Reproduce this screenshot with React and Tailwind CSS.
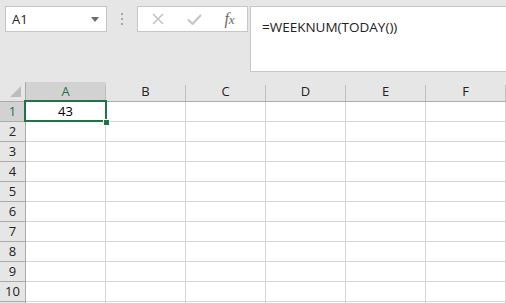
import React from "react";

const cols = ["A", "B", "C", "D", "E", "F"];
const rows = [1, 2, 3, 4, 5, 6, 7, 8, 9, 10, 11];

export default function App() {
  return (
    <div
      className="relative w-[506px] h-[303px] overflow-hidden bg-[#e6e6e6] text-[#222]"
      style={{ fontFamily: '"Open Sans", "Noto Sans", sans-serif' }}
    >
      {/* Toolbar */}
      <div className="flex items-start h-[82px] pt-[6px] pl-[5px]">
        <div className="shrink-0 w-[102px] h-[26px] bg-white border border-[#c6c6c6] flex items-center justify-between pl-[6px] pr-[7px]">
          <span className="text-[13px] leading-none text-[#222]">A1</span>
          <svg width="8" height="5" viewBox="0 0 8 5">
            <path d="M0 0 L8 0 L4 5 Z" fill="#6b6b6b" />
          </svg>
        </div>
        <div className="shrink-0 w-[30px] h-[26px] flex flex-col items-center justify-center gap-[3px]">
          <span className="block w-[2px] h-[2px] bg-[#a8a8a8]" />
          <span className="block w-[2px] h-[2px] bg-[#a8a8a8]" />
          <span className="block w-[2px] h-[2px] bg-[#a8a8a8]" />
        </div>
        <div className="shrink-0 w-[111px] h-[26px] bg-white border border-[#c6c6c6] flex items-center">
          <div className="w-[38px] flex justify-center pl-[1px]">
            <svg width="12" height="12" viewBox="0 0 12 12">
              <path d="M1 1 L11 11 M11 1 L1 11" stroke="#c4c4c4" strokeWidth="1.6" fill="none" />
            </svg>
          </div>
          <div className="w-[36px] flex justify-center">
            <svg width="15" height="11" viewBox="0 0 15 11">
              <path d="M1 5.5 L5.5 10 L14 1" stroke="#c4c4c4" strokeWidth="2" fill="none" />
            </svg>
          </div>
          <div className="w-[35px] flex justify-center">
            <span
              className="italic text-[16px] leading-none text-[#666]"
              style={{ fontFamily: '"Liberation Serif", serif' }}
            >
              f<span className="text-[13px]">x</span>
            </span>
          </div>
        </div>
        <div className="shrink-0 ml-[2px] w-[270px] h-[66px] bg-white border border-[#c6c6c6] pl-[11px] pt-[7px]">
          <span className="text-[13.5px] leading-[16px] text-[#222]">=WEEKNUM(TODAY())</span>
        </div>
      </div>

      {/* Grid */}
      <div className="grid grid-cols-[26px_repeat(6,80px)] text-[13px] leading-none">
        {/* header row */}
        <div className="relative h-[20px] border-r border-b border-[#ababab]">
          <svg className="absolute left-[10px] top-[4px]" width="12" height="12" viewBox="0 0 12 12">
            <path d="M0 11 L11 0 L11 11 Z" fill="#bdbdbd" />
          </svg>
        </div>
        {cols.map((c, i) => (
          <div
            key={c}
            className={
              "h-[20px] flex items-center justify-center border-b border-[#ababab] " +
              (i === 0 ? "bg-[#d2d2d2] text-[#217346]" : "text-[#222]")
            }
          >
            <div className="flex-1 text-center">{c}</div>
            <div className="w-px h-[16px] self-end bg-[#bebebe]" />
          </div>
        ))}
        {rows.map((r) => (
          <React.Fragment key={r}>
            <div
              className={
                "h-[20px] flex items-center justify-center border-r border-b border-[#ababab] " +
                (r === 1 ? "bg-[#d2d2d2] text-[#217346]" : "text-[#222]")
              }
            >
              <span>{r <= 10 ? r : ""}</span>
            </div>
            {cols.map((c) => (
              <div
                key={c}
                className="h-[20px] bg-white border-r border-b border-[#d4d4d4] flex items-center justify-center text-black"
              >
                {r === 1 && c === "A" ? "43" : ""}
              </div>
            ))}
          </React.Fragment>
        ))}
      </div>

      {/* Selection */}
      <div className="absolute left-[24px] top-[100px] w-[83px] h-[22px] border-2 border-[#217346]" />
      <div className="absolute left-[103px] top-[119px] w-[5px] h-[5px] bg-[#217346] border border-white box-content" />
    </div>
  );
}
